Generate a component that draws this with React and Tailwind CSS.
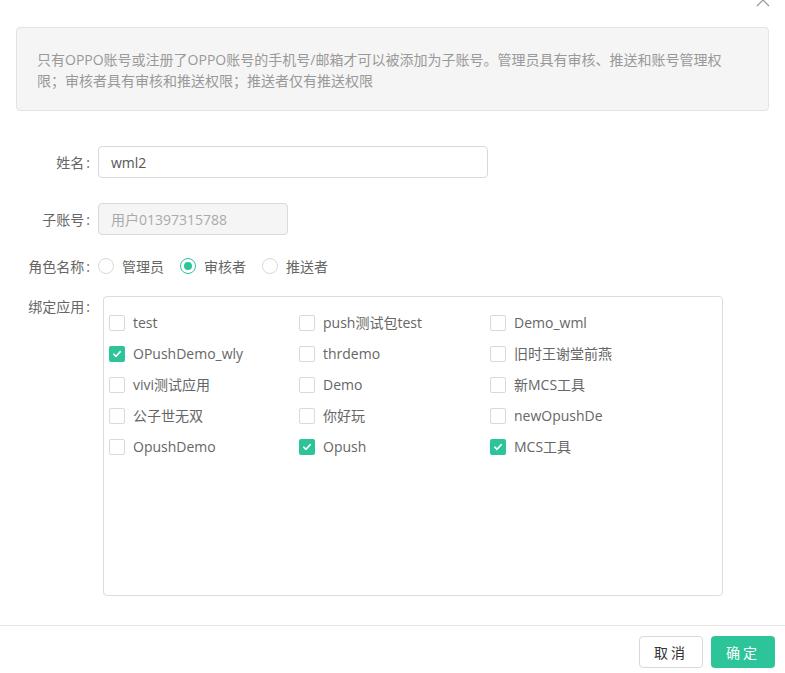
import React from "react";

const apps = [
  { name: "test", checked: false },
  { name: "push测试包test", checked: false },
  { name: "Demo_wml", checked: false },
  { name: "OPushDemo_wly", checked: true },
  { name: "thrdemo", checked: false },
  { name: "旧时王谢堂前燕", checked: false },
  { name: "vivi测试应用", checked: false },
  { name: "Demo", checked: false },
  { name: "新MCS工具", checked: false },
  { name: "公子世无双", checked: false },
  { name: "你好玩", checked: false },
  { name: "newOpushDe", checked: false },
  { name: "OpushDemo", checked: false },
  { name: "Opush", checked: true },
  { name: "MCS工具", checked: true },
];

const roles = [
  { name: "管理员", checked: false },
  { name: "审核者", checked: true },
  { name: "推送者", checked: false },
];

function Checkbox({ checked }) {
  if (checked) {
    return (
      <span className="w-4 h-4 rounded-[2px] bg-[#2ec499] flex items-center justify-center shrink-0">
        <svg width="10" height="10" viewBox="0 0 10 10" fill="none">
          <path d="M1.8 5.2 L4 7.3 L8.3 2.6" stroke="white" strokeWidth="1.6" strokeLinecap="round" strokeLinejoin="round" />
        </svg>
      </span>
    );
  }
  return <span className="w-4 h-4 rounded-[2px] border border-[#d9d9d9] bg-white shrink-0" />;
}

function Radio({ checked }) {
  return (
    <span
      className={
        checked
          ? "w-4 h-4 rounded-full border border-[#2ec499] flex items-center justify-center shrink-0"
          : "w-4 h-4 rounded-full border border-[#d9d9d9] shrink-0"
      }
    >
      {checked && <span className="w-2 h-2 rounded-full bg-[#2ec499]" />}
    </span>
  );
}

function Label({ children }) {
  return (
    <div className="w-[90px] text-right text-[14px] text-[#666] shrink-0">
      {children}
      <span className="ml-[2px]">:</span>
    </div>
  );
}

export default function App() {
  return (
    <div className="relative w-[785px] h-[673px] bg-white font-['Open_Sans','Noto_Sans_CJK_SC',sans-serif] overflow-hidden">
      {/* close button */}
      <svg className="absolute -top-[7px] right-[15px]" width="14" height="14" viewBox="0 0 14 14">
        <path d="M1 1 L13 13 M13 1 L1 13" stroke="#999" strokeWidth="1.2" />
      </svg>

      <div className="pt-[27px] px-4">
        <div className="h-[84px] bg-[#f5f5f5] border border-[#e3e3e3] rounded-[4px] px-5 flex items-center text-[14px] leading-[21px] text-[#999]">
          <p className="pt-[1px]">
            只有OPPO账号或注册了OPPO账号的手机号/邮箱才可以被添加为子账号。管理员具有审核、推送和账号管理权
            <br />
            限；审核者具有审核和推送权限；推送者仅有推送权限
          </p>
        </div>
      </div>

      <div className="mt-[35px]">
        <div className="flex items-center h-8">
          <Label>姓名</Label>
          <div className="ml-2 w-[390px] h-8 border border-[#d9d9d9] rounded-[4px] px-3 flex items-center text-[14px] text-[#555]">
            wml2
          </div>
        </div>

        <div className="flex items-center h-8 mt-[25px]">
          <Label>子账号</Label>
          <div className="ml-2 w-[190px] h-8 border border-[#d9d9d9] bg-[#f5f5f5] rounded-[4px] px-3 flex items-center text-[14px] text-[#aaa]">
            用户01397315788
          </div>
        </div>

        <div className="flex items-center h-8 mt-[15px]">
          <Label>角色名称</Label>
          <div className="ml-2 flex items-center gap-[16px]">
            {roles.map((r) => (
              <div key={r.name} className="flex items-center gap-2 text-[14px] text-[#666]">
                <Radio checked={r.checked} />
                <span>{r.name}</span>
              </div>
            ))}
          </div>
        </div>

        <div className="flex items-start mt-[14px]">
          <div className="pt-0">
            <Label>绑定应用</Label>
          </div>
          <div className="ml-[13px] w-[620px] h-[300px] border border-[#dcdcdc] rounded-[4px] pl-[5px] pt-[10px]">
            <div className="grid grid-cols-[190px_191px_190px]">
              {apps.map((a) => (
                <div key={a.name} className="h-[31px] flex items-center gap-2 text-[14px] text-[#666]">
                  <Checkbox checked={a.checked} />
                  <span>{a.name}</span>
                </div>
              ))}
            </div>
          </div>
        </div>
      </div>

      <div className="mt-[29px] border-t border-[#e8e8e8] flex justify-end gap-2 pt-[10px] pr-[10px]">
        <button className="w-16 h-8 border border-[#d9d9d9] rounded-[4px] bg-white text-[14px] text-[#333] tracking-[3px]">
          取消
        </button>
        <button className="w-16 h-8 rounded-[4px] bg-[#2ec499] text-[14px] text-white tracking-[3px]">
          确定
        </button>
      </div>
    </div>
  );
}
